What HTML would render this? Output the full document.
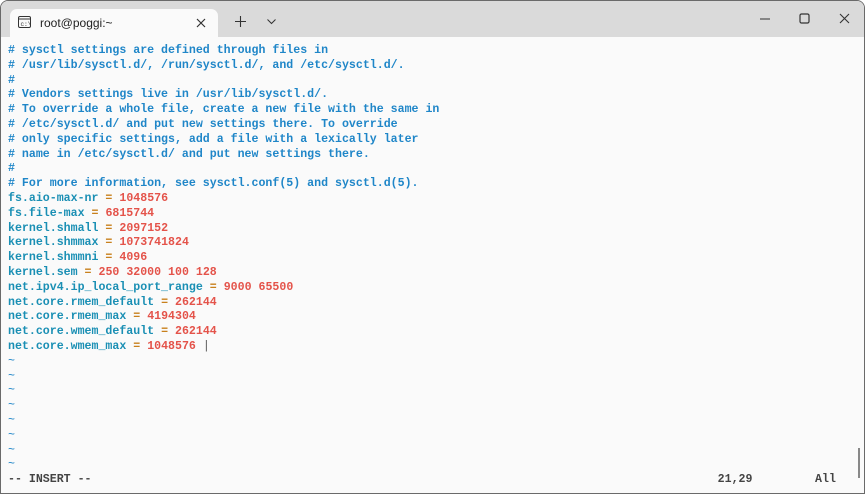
<!DOCTYPE html>
<html><head><style>
html,body{margin:0;padding:0;width:865px;height:494px;overflow:hidden;background:#fff}
.win{position:absolute;left:0;top:0;width:863px;height:492px;border:1px solid #6a6a6a;border-radius:8px 8px 0 0;background:#fafafa;overflow:hidden}
.title{position:absolute;left:0;top:0;width:100%;height:36px;background:#dadada}
.tab{position:absolute;left:9px;top:8px;width:208px;height:28px;background:#fafafa;border-radius:7px 7px 0 0}
.tab .t{position:absolute;left:30px;top:7px;font:12px "Liberation Sans",sans-serif;color:#222}
.term{position:absolute;left:7px;top:43px;font:bold 11.6px/14.8px "Liberation Mono",monospace;white-space:pre;color:#1a7fc0}
.c{color:#1f86c8}.k{color:#1a8fb4}.e{color:#c8801c}.n{color:#e4534a}.tl{color:#1f86c8;font-weight:normal}
.st{color:#444}
</style></head><body>
<div class="win">
<div class="title">
<div class="tab">
<svg style="position:absolute;left:8px;top:7px" width="14" height="13"><rect x="0.5" y="0.5" width="12" height="11" rx="1.5" fill="none" stroke="#333"/><line x1="1" y1="3" x2="12" y2="3" stroke="#333"/><text x="2.5" y="10" font-size="6" font-family="Liberation Mono" fill="#333">c:\</text></svg>
<div class="t">root@poggi:~</div>
<svg style="position:absolute;left:186px;top:9px" width="10" height="10"><path d="M1 1L9 9M9 1L1 9" stroke="#333" stroke-width="1.2"/></svg>
</div>
<svg style="position:absolute;left:234px;top:15px" width="11" height="11"><path d="M5.5 0V11M0 5.5H11" stroke="#333" stroke-width="1.1"/></svg>
<svg style="position:absolute;left:266px;top:18px" width="9" height="6"><path d="M0.5 0.5L4.5 4.5L8.5 0.5" stroke="#333" fill="none"/></svg>
<svg style="position:absolute;left:759px;top:17px" width="10" height="2"><path d="M0 1H10" stroke="#333"/></svg>
<svg style="position:absolute;left:798px;top:12px" width="11" height="11"><rect x="1" y="1" width="9" height="9" rx="1.5" stroke="#333" fill="none" stroke-width="1.2"/></svg>
<svg style="position:absolute;left:838px;top:12px" width="11" height="11"><path d="M1 1L10 10M10 1L1 10" stroke="#333" stroke-width="1.1"/></svg>
</div>
<div class="term"><span class="c"># sysctl settings are defined through files in
# /usr/lib/sysctl.d/, /run/sysctl.d/, and /etc/sysctl.d/.
#
# Vendors settings live in /usr/lib/sysctl.d/.
# To override a whole file, create a new file with the same in
# /etc/sysctl.d/ and put new settings there. To override
# only specific settings, add a file with a lexically later
# name in /etc/sysctl.d/ and put new settings there.
#
# For more information, see sysctl.conf(5) and sysctl.d(5).</span>
<span class="k">fs.aio-max-nr</span> <span class="e">=</span> <span class="n">1048576</span>
<span class="k">fs.file-max</span> <span class="e">=</span> <span class="n">6815744</span>
<span class="k">kernel.shmall</span> <span class="e">=</span> <span class="n">2097152</span>
<span class="k">kernel.shmmax</span> <span class="e">=</span> <span class="n">1073741824</span>
<span class="k">kernel.shmmni</span> <span class="e">=</span> <span class="n">4096</span>
<span class="k">kernel.sem</span> <span class="e">=</span> <span class="n">250 32000 100 128</span>
<span class="k">net.ipv4.ip_local_port_range</span> <span class="e">=</span> <span class="n">9000 65500</span>
<span class="k">net.core.rmem_default</span> <span class="e">=</span> <span class="n">262144</span>
<span class="k">net.core.rmem_max</span> <span class="e">=</span> <span class="n">4194304</span>
<span class="k">net.core.wmem_default</span> <span class="e">=</span> <span class="n">262144</span>
<span class="k">net.core.wmem_max</span> <span class="e">=</span> <span class="n">1048576</span> <span style="color:#555;font-weight:normal">|</span>
<span class="tl">~
~
~
~
~
~
~
~</span>
<span class="st">-- INSERT --                                                                                          21,29         All</span></div>
<div style="position:absolute;left:857px;top:447px;width:2px;height:30px;background:#888"></div>
</div>
</body></html>
